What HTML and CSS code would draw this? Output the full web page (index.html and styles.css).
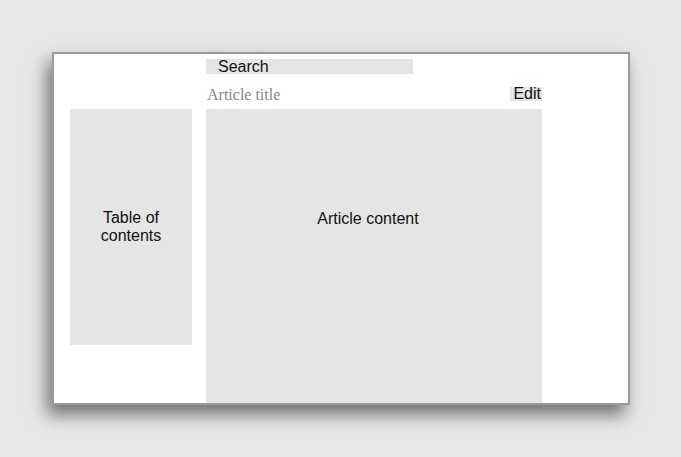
FILE: index.html
```html
<!DOCTYPE html>
<html>
<head>
<meta charset="utf-8">
<link rel="stylesheet" href="styles.css">
</head>
<body>
<div class="window">
  <div class="header">
    <div class="search">Search</div>
    <div class="title-row">
      <span class="title">Article title</span>
      <span class="edit">Edit</span>
    </div>
  </div>
  <div class="main">
    <div class="toc">Table of<br>contents</div>
    <div class="content">Article content</div>
  </div>
</div>
</body>
</html>
```
FILE: styles.css
```css
html, body {
  margin: 0;
  padding: 0;
}
body {
  background: #e6e7e9;
  width: 681px;
  height: 457px;
  overflow: hidden;
  font-family: "Liberation Sans", Arial, sans-serif;
  font-size: 16px;
  color: #111;
}
.window {
  margin: 52px 0 0 52px;
  width: 558px;
  height: 344px;
  padding: 5px 0 0 16px;
  border: 2px solid #9a9a9a;
  background: #fff;
  box-shadow: -5px 10px 16px rgba(0, 0, 0, 0.5);
}
.header {
  margin-left: 136px;
  width: 336px;
}
.search {
  width: 195px;
  height: 15px;
  line-height: 15px;
  padding-left: 12px;
  background: #e5e5e5;
}
.title-row {
  margin-top: 13px;
  height: 14px;
  line-height: 14px;
  display: flex;
  justify-content: space-between;
}
.title {
  font-family: "Liberation Serif", "Times New Roman", serif;
  color: #888;
  padding: 1px 0 0 1px;
}
.edit {
  background: #e5e5e5;
  padding: 0 1px 0 3px;
}
.main {
  margin-top: 8px;
  height: 294px;
  display: flex;
  gap: 14px;
  align-items: flex-start;
}
.toc {
  width: 122px;
  height: 236px;
  background: #e5e5e5;
  display: flex;
  align-items: center;
  justify-content: center;
  text-align: center;
}
.content {
  width: 324px;
  height: 194px;
  padding: 100px 12px 0 0;
  background: #e5e5e5;
  text-align: center;
  line-height: 19px;
}
```
